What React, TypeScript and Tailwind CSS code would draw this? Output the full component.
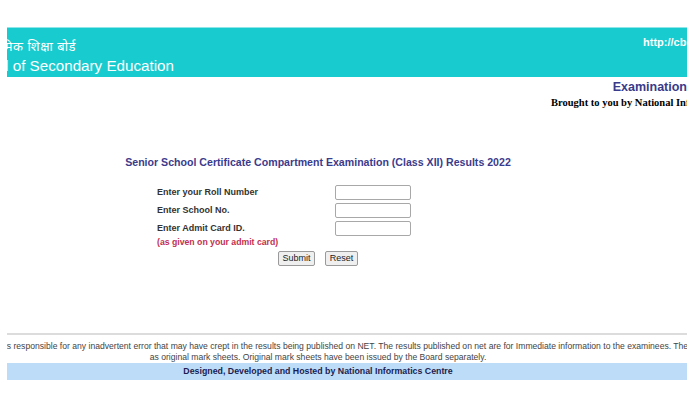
export default function App() {
  const sans = { fontFamily: '"Liberation Sans", Arial, sans-serif' };
  return (
    <div className="w-[700px] h-[415px] bg-white overflow-hidden pt-[27px] pl-[7px]" style={sans}>
      <div className="w-[680px] overflow-hidden">
        <div className="w-[738px] -ml-[58px]">
          {/* header band */}
          <div className="h-[50px] bg-[#18cbce] flex border-t border-[#8fe6e8]">
            <div className="flex-1 flex flex-col text-white">
              <div className="w-[127px] flex justify-end mt-[12px] h-[16px] items-center">
                <span
                  className="whitespace-nowrap text-[13px] tracking-[0.5px]"
                  style={{ fontFamily: '"Noto Sans Devanagari", "Lohit Devanagari", "Noto Sans", sans-serif' }}
                >
                  केन्द्रीय माध्यमिक शिक्षा बोर्ड
                </span>
              </div>
              <div className="w-[225px] flex justify-end h-[18px] items-center mt-[1px]">
                <span className="whitespace-nowrap text-[15.2px]">Central Board of Secondary Education</span>
              </div>
            </div>
            <div className="w-[44px] pt-[1px]">
              <span className="whitespace-nowrap text-white font-bold text-[11px]">http://cbseresults.nic.in</span>
            </div>
          </div>

          {/* sub header */}
          <div className="flex justify-end mt-[3px] h-[14px] items-center">
            <span className="text-[12.5px] font-bold text-[#3a3a8a] whitespace-nowrap">Examination</span>
          </div>
          <div className="mt-[3px] h-[12px] flex items-center pl-[602px]">
            <span
              className="whitespace-nowrap text-[10.5px] font-bold text-black"
              style={{ fontFamily: '"Liberation Serif", "Times New Roman", serif' }}
            >
              Brought to you by National Informatics Centre
            </span>
          </div>

          {/* title */}
          <div className="mt-[48px] h-[12px] flex justify-center items-center">
            <span className="whitespace-nowrap text-[10.6px] font-bold text-[#3b3b8c]">
              Senior School Certificate Compartment Examination (Class XII) Results 2022
            </span>
          </div>

          {/* form */}
          <div className="mt-[16px] pl-[208px] flex flex-col">
            {["Enter your Roll Number", "Enter School No.", "Enter Admit Card ID."].map((label) => (
              <div key={label} className="flex h-[18px] items-start">
                <div className="w-[178px] leading-[15px] text-[9px] font-bold text-[#333]">{label}</div>
                <input
                  type="text"
                  className="w-[76px] h-[15px] border border-[#a8a8a8] rounded-[2px] bg-white outline-none"
                />
              </div>
            ))}
            <div className="-mt-[2px] leading-[10px] text-[8.7px] font-bold text-[#c2304f]">
              (as given on your admit card)
            </div>
          </div>
          <div className="mt-[4px] flex justify-center gap-[10px]">
            <button className="w-[37px] h-[15px] border border-[#9a9a9a] rounded-[2px] bg-[#efefef] text-[9px] leading-none text-[#222]">
              Submit
            </button>
            <button className="w-[33px] h-[15px] border border-[#9a9a9a] rounded-[2px] bg-[#efefef] text-[9px] leading-none text-[#222]">
              Reset
            </button>
          </div>

          {/* footer */}
          <div className="mt-[67px] h-[2px] bg-[#dcdcdc]" />
          <div className="mt-[6px] flex flex-col text-[8.6px] text-[#444] leading-[11px]">
            <div className="-ml-[32px]">
              <span className="whitespace-nowrap">
                Neither NIC nor CBSE is responsible for any inadvertent error that may have crept in the results being published on NET. The results published on net are for Immediate information to the examinees. These cannot be treated
              </span>
            </div>
            <div className="flex justify-center">
              <span className="whitespace-nowrap">
                as original mark sheets. Original mark sheets have been issued by the Board separately.
              </span>
            </div>
          </div>
          <div className="h-[17px] bg-[#bddcf8] flex justify-center items-center">
            <span className="whitespace-nowrap text-[8.8px] font-bold text-[#1c1c50]">
              Designed, Developed and Hosted by National Informatics Centre
            </span>
          </div>
        </div>
      </div>
    </div>
  );
}
